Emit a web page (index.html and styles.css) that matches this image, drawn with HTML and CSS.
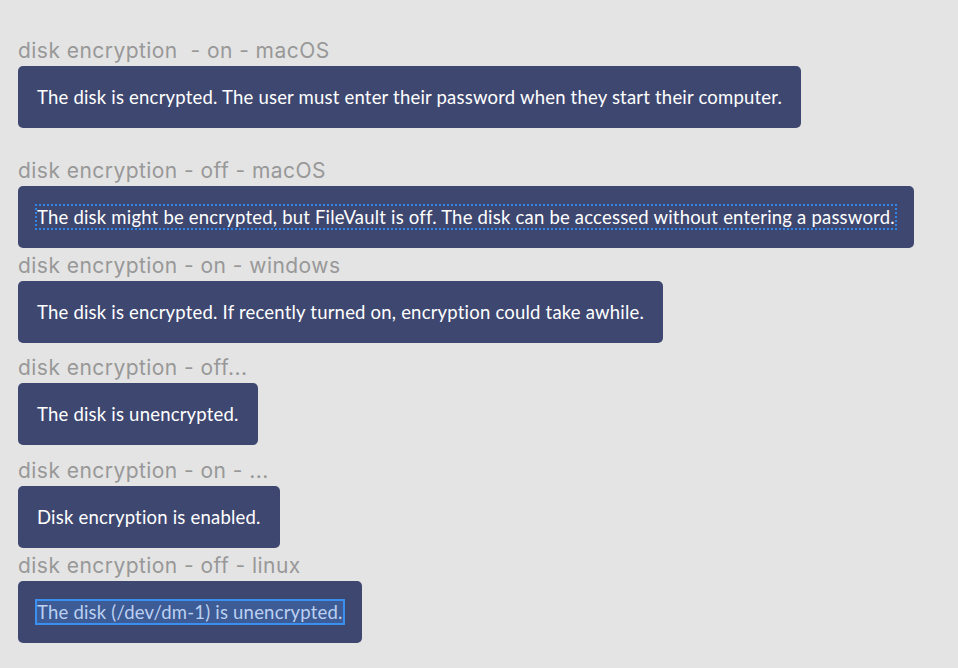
FILE: index.html
```html
<!DOCTYPE html>
<html lang="en">
<head>
<meta charset="utf-8">
<title>Disk encryption messages</title>
<link rel="stylesheet" href="styles.css">
</head>
<body>
<main class="list">
  <section class="item">
    <h2 class="label">disk encryption&nbsp; - on - macOS</h2>
    <div class="bubble"><span class="msg">The disk is encrypted. The user must enter their password when they start their computer.</span></div>
  </section>
  <section class="item item--gap-lg">
    <h2 class="label">disk encryption - off - macOS</h2>
    <div class="bubble"><span class="msg msg--focus">The disk might be encrypted, but FileVault is off. The disk can be accessed without entering a password.</span></div>
  </section>
  <section class="item item--gap-xs">
    <h2 class="label">disk encryption - on - windows</h2>
    <div class="bubble"><span class="msg">The disk is encrypted. If recently turned on, encryption could take awhile.</span></div>
  </section>
  <section class="item item--gap-md">
    <h2 class="label">disk encryption - off...</h2>
    <div class="bubble"><span class="msg">The disk is unencrypted.</span></div>
  </section>
  <section class="item item--gap-mdp">
    <h2 class="label">disk encryption - on - ...</h2>
    <div class="bubble"><span class="msg">Disk encryption is enabled.</span></div>
  </section>
  <section class="item item--gap-sm">
    <h2 class="label">disk encryption - off - linux</h2>
    <div class="bubble"><span class="msg msg--selected">The disk (/dev/dm-1) is unencrypted.</span></div>
  </section>
</main>
</body>
</html>
```

FILE: styles.css
```css
html, body {
  margin: 0;
  padding: 0;
  background: #e4e4e4;
}

body {
  padding: 39px 18px 0 18px;
}

.list {
  display: flex;
  flex-direction: column;
  align-items: flex-start;
}

.item {
  display: flex;
  flex-direction: column;
  align-items: flex-start;
}

.item--gap-lg { margin-top: 31px; }
.item--gap-md { margin-top: 13px; }
.item--gap-mdp { margin-top: 14px; }
.item--gap-xs { margin-top: 6px; }
.item--gap-sm { margin-top: 6px; }

.label {
  margin: 0 0 3px 0;
  font-family: Inter, "Liberation Sans", sans-serif;
  font-weight: 400;
  font-size: 21px;
  letter-spacing: 0.45px;
  line-height: 24px;
  color: #989898;
}

.bubble {
  background: #3e4770;
  border-radius: 5px;
  padding: 19px;
  font-family: Lato, "Open Sans", sans-serif;
  font-size: 18.5px;
  letter-spacing: 0.2px;
  line-height: 24px;
  color: #ffffff;
}

.msg--focus {
  outline: 2px dotted #2f86e8;
  outline-offset: 0;
}

.msg--selected {
  background: #3d5b94;
  color: #bcd0f2;
  outline: 2px solid #3a8ff0;
  outline-offset: 0;
}
```
